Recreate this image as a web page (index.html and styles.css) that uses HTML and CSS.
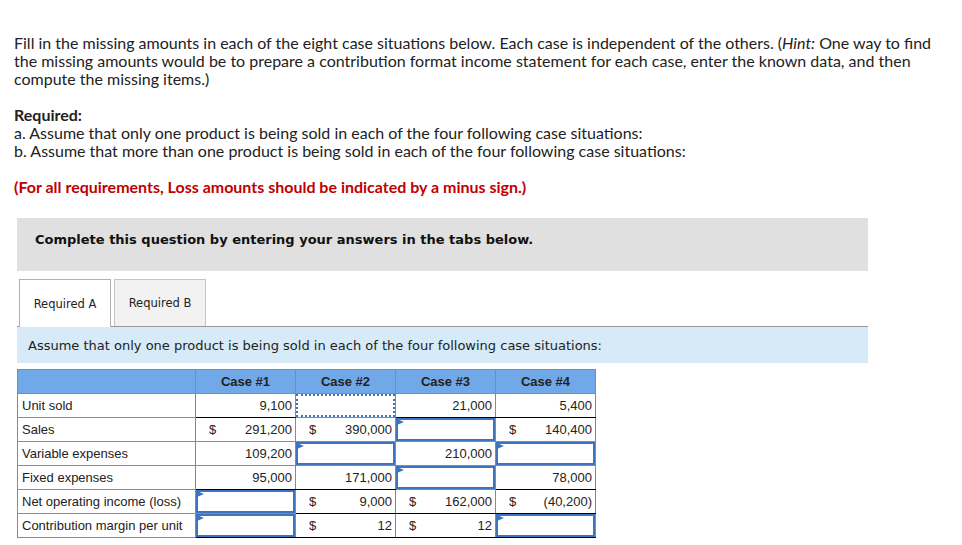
FILE: index.html
```html
<!DOCTYPE html>
<html>
<head>
<meta charset="utf-8">
<link rel="stylesheet" href="styles.css">
</head>
<body>
<div class="page">
  <div class="intro">
    <p class="para">Fill in the missing amounts in each of the eight case situations below. Each case is independent of the others. (<i>Hint:</i> One way to find<br>the missing amounts would be to prepare a contribution format income statement for each case, enter the known data, and then<br>compute the missing items.)</p>
    <p class="para"><b>Required:</b><br>a. Assume that only one product is being sold in each of the four following case situations:<br>b. Assume that more than one product is being sold in each of the four following case situations:</p>
    <p class="para red">(For all requirements, Loss amounts should be indicated by a minus sign.)</p>
  </div>
  <div class="panel">
    <div class="notice">Complete this question by entering your answers in the tabs below.</div>
    <div class="tabs">
      <div class="tab active">Required A</div>
      <div class="tab">Required B</div>
    </div>
    <div class="info">Assume that only one product is being sold in each of the four following case situations:</div>
    <table class="grid">
      <colgroup><col class="c-label"><col class="c-val"><col class="c-val"><col class="c-val"><col class="c-val"></colgroup>
      <thead>
        <tr><th></th><th>Case #1</th><th>Case #2</th><th>Case #3</th><th>Case #4</th></tr>
      </thead>
      <tbody>
        <tr>
          <td class="lbl">Unit sold</td>
          <td class="blk"><div class="v"><span></span><span>9,100</span></div></td>
          <td class="in"><div class="box focus"></div></td>
          <td class="blk"><div class="v"><span></span><span>21,000</span></div></td>
          <td class="blk"><div class="v"><span></span><span>5,400</span></div></td>
        </tr>
        <tr>
          <td class="lbl">Sales</td>
          <td><div class="v"><span>$</span><span>291,200</span></div></td>
          <td><div class="v"><span>$</span><span>390,000</span></div></td>
          <td class="in"><div class="box"><i class="flag"></i></div></td>
          <td><div class="v"><span>$</span><span>140,400</span></div></td>
        </tr>
        <tr>
          <td class="lbl">Variable expenses</td>
          <td><div class="v"><span></span><span>109,200</span></div></td>
          <td class="in"><div class="box"><i class="flag"></i></div></td>
          <td><div class="v"><span></span><span>210,000</span></div></td>
          <td class="in"><div class="box"><i class="flag"></i></div></td>
        </tr>
        <tr>
          <td class="lbl">Fixed expenses</td>
          <td class="blk"><div class="v"><span></span><span>95,000</span></div></td>
          <td class="blk"><div class="v"><span></span><span>171,000</span></div></td>
          <td class="in"><div class="box"><i class="flag"></i></div></td>
          <td class="blk"><div class="v"><span></span><span>78,000</span></div></td>
        </tr>
        <tr>
          <td class="lbl">Net operating income (loss)</td>
          <td class="in"><div class="box"><i class="flag"></i></div></td>
          <td class="blk"><div class="v"><span>$</span><span>9,000</span></div></td>
          <td class="blk"><div class="v"><span>$</span><span>162,000</span></div></td>
          <td class="blk"><div class="v"><span>$</span><span>(40,200)</span></div></td>
        </tr>
        <tr>
          <td class="lbl">Contribution margin per unit</td>
          <td class="in blk"><div class="box"><i class="flag"></i></div></td>
          <td class="blk"><div class="v"><span>$</span><span>12</span></div></td>
          <td class="blk"><div class="v"><span>$</span><span>12</span></div></td>
          <td class="in blk"><div class="box"><i class="flag"></i></div></td>
        </tr>
      </tbody>
    </table>
  </div>
</div>
</body>
</html>
```
FILE: styles.css
```css
html, body {
  margin: 0;
  padding: 0;
  background: #ffffff;
}
.page {
  padding-top: 34px;
}
.intro {
  padding-left: 14px;
  font-family: Lato, "Open Sans", sans-serif;
  font-size: 16px;
  line-height: 18px;
  color: #222;
  white-space: nowrap;
}
.para {
  margin: 0 0 18px 0;
}
.para b {
  font-weight: 700;
}
.red {
  color: #c00000;
  font-weight: 700;
  margin: 0;
}
.panel {
  margin-left: 17px;
  width: 851px;
  margin-top: 22px;
}
.notice {
  background: #e0e0e0;
  height: 53px;
  box-sizing: border-box;
  padding: 14px 0 0 18px;
  font-family: "DejaVu Sans", Verdana, sans-serif;
  font-weight: 700;
  font-size: 13px;
  line-height: 16px;
  color: #111;
}
.tabs {
  display: flex;
  gap: 3px;
  padding-left: 2px;
  margin-top: 8px;
  border-bottom: 1px solid #999;
  height: 47px;
}
.tab {
  width: 92px;
  height: 47px;
  box-sizing: border-box;
  border: 1px solid #c4c4c4;
  border-bottom: none;
  background: #f2f2f2;
  display: flex;
  align-items: center;
  justify-content: center;
  font-family: "DejaVu Sans", Verdana, sans-serif;
  font-size: 11.5px;
  color: #222;
}
.tab.active {
  background: #fff;
  height: 48px;
  border-color: #b0b0b0;
  position: relative;
  z-index: 1;
}
.info {
  background: #d6eaf8;
  height: 36px;
  box-sizing: border-box;
  padding: 11px 0 0 11px;
  font-family: "DejaVu Sans", Verdana, sans-serif;
  font-size: 13px;
  line-height: 15px;
  color: #222;
}
.grid {
  margin-top: 6px;
  border-collapse: collapse;
  table-layout: fixed;
  width: 579px;
  font-family: "Liberation Sans", Arial, sans-serif;
  font-size: 13px;
  color: #222;
}
.c-label { width: 178px; }
.c-val { width: 100px; }
.grid th, .grid td {
  border: 1px solid #8a8a8a;
  height: 24px;
  padding: 0;
  box-sizing: border-box;
}
.grid th {
  background: #70a8e8;
  font-weight: 700;
  text-align: center;
  color: #222;
}
.grid td.lbl {
  padding-left: 4px;
}
.grid td.blk {
  border-bottom-color: #000;
}
.v {
  display: flex;
  justify-content: space-between;
  padding: 0 3px 0 13px;
}
.in {
  position: relative;
}
.box {
  position: absolute;
  inset: 0;
  border: 2px solid #3d74bd;
}
.box.focus {
  border: 2px dotted #3d74bd;
}
.flag {
  position: absolute;
  left: -1px;
  top: -1px;
  width: 0;
  height: 0;
  border-top: 3.5px solid transparent;
  border-bottom: 3.5px solid transparent;
  border-left: 7px solid #3d74bd;
}
```
